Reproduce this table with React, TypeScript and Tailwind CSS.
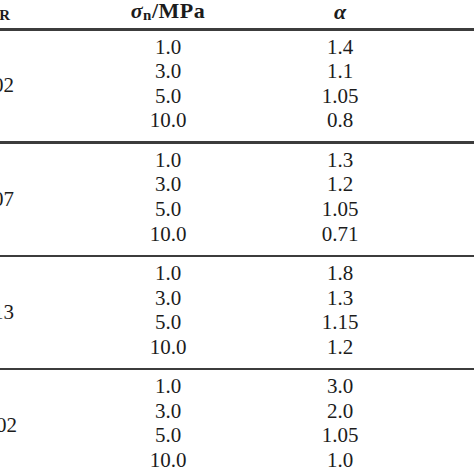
import React from "react";

const groups = [
  { label: "0.02", pad: "pr-[3px]", rows: [["1.0", "1.4"], ["3.0", "1.1"], ["5.0", "1.05"], ["10.0", "0.8"]] },
  { label: "0.07", pad: "pr-[3px]", rows: [["1.0", "1.3"], ["3.0", "1.2"], ["5.0", "1.05"], ["10.0", "0.71"]] },
  { label: "0.13", pad: "pr-[3px]", rows: [["1.0", "1.8"], ["3.0", "1.3"], ["5.0", "1.15"], ["10.0", "1.2"]] },
  { label: "0.202", pad: "pr-0", rows: [["1.0", "3.0"], ["3.0", "2.0"], ["5.0", "1.05"], ["10.0", "1.0"]] },
];

export default function App() {
  return (
    <div
      className="w-[474px] h-[474px] overflow-hidden bg-white text-[#1c1c1c]"
      style={{ fontFamily: '"Liberation Serif", "DejaVu Serif", serif' }}
    >
      {/* header */}
      <div className="grid grid-cols-[17px_302px_42px] h-[28px] items-end pb-[10px]">
        <div className="flex justify-end pr-[7px] text-[15px] font-bold leading-none">R</div>
        <div className="text-center text-[22px] font-bold leading-none tracking-[0.5px] whitespace-nowrap">
          <span className="italic">σ</span>
          <span className="text-[15px] align-[-2px]">n</span>
          <span>/MPa</span>
        </div>
        <div className="text-center text-[22px] font-bold italic leading-none">α</div>
      </div>
      {groups.map((g, i) => (
        <div key={i}>
          <div className="h-[2.5px] bg-[#3c3c3c]" />
          <div className="grid grid-cols-[17px_302px_42px] pt-[4px] pb-[8.4px] text-[21px] leading-[24.6px]">
            <div className="row-span-4 flex items-center justify-end whitespace-nowrap pt-[4px]">
              <span className={g.pad}>{g.label}</span>
            </div>
            {g.rows.map((r, j) => (
              <React.Fragment key={j}>
                <div className="text-center col-start-2">{r[0]}</div>
                <div className="text-center col-start-3">{r[1]}</div>
              </React.Fragment>
            ))}
          </div>
        </div>
      ))}
    </div>
  );
}
